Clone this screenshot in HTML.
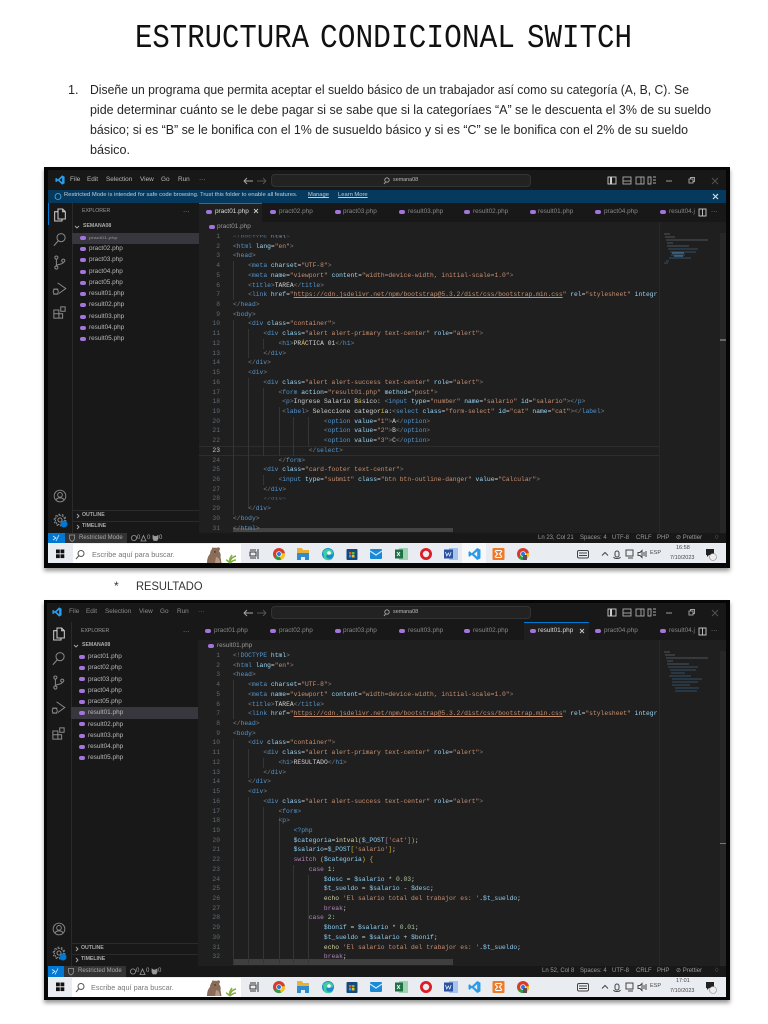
<!DOCTYPE html>
<html lang="es"><head><meta charset="utf-8"><title>Estructura Condicional Switch</title>
<style>
html,body{margin:0;padding:0;background:#fff}
body{position:relative;width:768px;height:1024px;overflow:hidden;font-family:"Liberation Sans",sans-serif}
.b{position:absolute}
.x{position:absolute;white-space:nowrap;line-height:1;font-size:6.4px;color:#b8b8b8}
.scr{position:absolute;left:0;top:0;width:768px;height:1024px;filter:blur(.35px)}
pre{position:absolute;margin:0;font:6.32px/9.72px "Liberation Mono",monospace;color:#d0d0d0;overflow:hidden;white-space:pre}
pre.g{text-align:right;color:#626a70;width:20px;left:200px}
i{font-style:normal}
.t{color:#5296d0}.a{color:#9bd5f5}.s{color:#c98f70}.d{color:#7c7c7c}.v{color:#8fd0f5}.k{color:#b583bf}.f{color:#d5d5a5}.n{color:#aac8a0}.y{color:#d8b830}.u{text-decoration:underline}
.q{display:inline-block;transform:scaleY(.55);opacity:.75}
.ph{position:absolute;width:6px;height:4px;border-radius:2px;background:#a274dc}
.w{position:absolute;background:#353535;width:1px}
svg{position:absolute;left:0;top:0;overflow:visible}
</style></head><body>
<svg width="768" height="160" style="z-index:2">
<g font-family="Liberation Mono,monospace" font-size="33" fill="#111">
<text x="135" y="47" textLength="174" lengthAdjust="spacingAndGlyphs">ESTRUCTURA</text>
<text x="320" y="47" textLength="195" lengthAdjust="spacingAndGlyphs">CONDICIONAL</text>
<text x="527" y="47" textLength="105" lengthAdjust="spacingAndGlyphs">SWITCH</text>
</g>
<g font-family="Liberation Sans,sans-serif" font-size="12.6" fill="#262626">
<text x="68" y="94">1.</text>
<text x="90" y="94" textLength="599" lengthAdjust="spacingAndGlyphs">Diseñe un programa que permita aceptar el sueldo básico de un trabajador así como su categoría (A, B, C). Se</text>
<text x="90" y="114" textLength="621" lengthAdjust="spacingAndGlyphs">pide determinar cuánto se le debe pagar si se sabe que si la categoríaes “A” se le descuenta el 3% de su sueldo</text>
<text x="90" y="134" textLength="598" lengthAdjust="spacingAndGlyphs">básico; si es “B” se le bonifica con el 1% de susueldo básico y si es “C” se le bonifica con el 2% de su sueldo</text>
<text x="90" y="154" textLength="40" lengthAdjust="spacingAndGlyphs">básico.</text>
</g>
<defs>
<symbol id="files" viewBox="0 0 24 24"><path d="M9 3h7l4 4v11H9zM16 3v4h4M9 7H4v14h11v-3" fill="none" stroke="#c8c8c8" stroke-width="1.6"/></symbol>
<symbol id="search" viewBox="0 0 24 24"><circle cx="14.5" cy="9" r="6.5" fill="none" stroke="#8a8a8a" stroke-width="1.6"/><path d="M10 14L3 22" stroke="#8a8a8a" stroke-width="1.6"/></symbol>
<symbol id="scm" viewBox="0 0 24 24"><g fill="none" stroke="#8a8a8a" stroke-width="1.6"><circle cx="7" cy="4" r="2.5"/><circle cx="7" cy="20" r="2.5"/><circle cx="18" cy="9" r="2.5"/><path d="M7 6.5v11M18 11.5c0 4-11 3-11 6"/></g></symbol>
<symbol id="dbg" viewBox="0 0 24 24"><g fill="none" stroke="#8a8a8a" stroke-width="1.6"><path d="M9 3l13 9-11 8"/><circle cx="6" cy="17" r="4"/><path d="M2 13h8M2 21h8"/></g></symbol>
<symbol id="ext" viewBox="0 0 24 24"><g fill="none" stroke="#8a8a8a" stroke-width="1.6"><path d="M3 8h8v13H3zM3 14h14v7h-6"/><path d="M14 3h7v7h-7z"/></g></symbol>
<symbol id="acc" viewBox="0 0 24 24"><g fill="none" stroke="#8a8a8a" stroke-width="1.6"><circle cx="12" cy="12" r="10"/><circle cx="12" cy="10" r="4"/><path d="M5 19c2-5 12-5 14 0"/></g></symbol>
<symbol id="gear" viewBox="0 0 24 24"><g fill="none" stroke="#9a9a9a" stroke-width="1.6"><circle cx="12" cy="12" r="3.5"/><circle cx="12" cy="12" r="8" stroke-dasharray="3 1.5"/><circle cx="12" cy="12" r="10" stroke-dasharray="3 3.3"/></g></symbol>
<symbol id="code" viewBox="0 0 24 24"><path d="M17 1l6 3v16l-6 3L7 13.500 3 17l-2-1V8l2-1 4 3.500zM17 7l-6 5 6 5z" fill="#2a9be8" fill-rule="evenodd"/></symbol>
<g id="stl" fill="none" stroke="#9a9a9a" stroke-width=".8">
<path d="M53 -2l3 2-3 2M59 -3l-3 6" stroke="#dcefff"/>
<path d="M69.500 -3h5v3c0 2-1.500 3-2.500 3.500-1-.5-2.500-1.500-2.500-3.500z"/>
<circle cx="134" cy="0" r="2.600"/><path d="M141 3l2.500-5.500L146 3z"/><path d="M153 -2.500l1.500 1h2l1.500-1v3l-1 2h-3l-1-2z" fill="#9a9a9a"/>
</g>
<g id="tbi">
<g fill="#111"><rect x="56" y="-4.500" width="3.800" height="3.800"/><rect x="60.500" y="-4.500" width="3.800" height="3.800"/><rect x="56" y=".3" width="3.800" height="3.800"/><rect x="60.500" y=".3" width="3.800" height="3.800"/></g>
<circle cx="81" cy="-.5" r="3" fill="none" stroke="#555" stroke-width="1"/><path d="M79 1.500L76 5" stroke="#555"/>
<path d="M250 -4h6M250 4h6M250 -2h6v4h-6zM258 -5v10" fill="none" stroke="#333" stroke-width="1"/>
<g id="chr"><circle cx="279" cy="0" r="6" fill="#d93a2c"/><path d="M279 0L274 3.500A6 6 0 0 0 281 5.700z" fill="#2f9e46"/><path d="M279 0L285 -1A6 6 0 0 1 281 5.700z" fill="#f5c518"/><circle cx="279" cy="0" r="2.800" fill="#fff"/><circle cx="279" cy="0" r="2.100" fill="#2a7de1"/></g>
<path d="M297 -6h5l1 2h6v3h-12z" fill="#e8b23a"/><path d="M297 -1h12v7h-4v-3h-4v3h-4z" fill="#2e8ccf"/>
<circle cx="328" cy="0" r="6" fill="#1c8ad0"/><path d="M323 -2c3-5 10-3 10 1 0 2-3 2-4 1-2 0-4 2-2 4 1 1 4 1 6 0-2 3-7 3-9 0z" fill="#3fcf9a"/><circle cx="329" cy="-1" r="1.800" fill="#fff"/>
<rect x="346.500" y="-5" width="11" height="11" rx="1" fill="#174a7c"/><rect x="349" y="-2" width="2.500" height="2.500" fill="#e8562a"/><rect x="352" y="-2" width="2.500" height="2.500" fill="#7cb82f"/><rect x="349" y="1" width="2.500" height="2.500" fill="#2aa0e8"/><rect x="352" y="1" width="2.500" height="2.500" fill="#f5bd1f"/>
<rect x="370" y="-5" width="12" height="10" rx="1" fill="#1b8ad6"/><path d="M370 -3l6 4 6-4" fill="none" stroke="#cfeaff" stroke-width="1.200"/>
<rect x="399" y="-6" width="9" height="12" fill="#9dd3b3"/><rect x="395" y="-4.500" width="8" height="9" fill="#1d7044"/><path d="M397 -2l3 4M400 -2l-3 4" stroke="#fff" stroke-width=".9"/>
<circle cx="426" cy="0" r="4.600" fill="none" stroke="#dd1c24" stroke-width="2.800"/>
<rect x="449" y="-6" width="9" height="12" fill="#a9c4ea"/><rect x="444" y="-4.500" width="9" height="9" fill="#2a52a5"/><path d="M445.500 -2l1.300 4 1.500-3 1.500 3 1.300-4" fill="none" stroke="#fff" stroke-width=".7"/>
<use href="#code" x="468" y="-6.500" width="13" height="13"/>
<rect x="492.500" y="-6" width="12" height="12" rx="1" fill="#ef7a2a"/><path d="M495 -3l2.500 3-2.500 3M502 -3l-2.500 3 2.500 3M495.500 -3.500h6M495.500 3.500h6" fill="none" stroke="#fff" stroke-width="1.100"/>
<use href="#chr" x="244"/><rect x="523" y="1" width="4" height="5" fill="#6b4a58"/>
<g fill="none" stroke="#444" stroke-width="1"><rect x="577.500" y="-3.500" width="11" height="7.500" rx="1.500"/><path d="M579 -1h8M579 1.500h8"/><path d="M602 1.500l3-3 3 3"/><rect x="615" y="-3" width="4" height="6" rx="2"/><path d="M613.500 3c1 2 6 2 7 0"/><rect x="626" y="-4" width="7" height="6"/><path d="M628 4h5"/><path d="M638 -1.500h2l2-2v7l-2-2h-2zM644 -2v4M646 -3v6"/></g>
<path d="M706 -5h8v6h-5l-2 2v-2h-1z" fill="#222"/><circle cx="713" cy="3" r="3.500" fill="#eee" stroke="#888" stroke-width=".6"/>
<path d="M207 9c0-4 1-7 3-9 0-2 1-4 2-5 0-2 1-2 2-1 1-.5 2-.5 3 0 1-1 2-1 3 .5 0 1-.5 2-1 2.500 1.500 2 2 4 1.500 6l1 6z" fill="#8a6c58"/><path d="M216 3c2 0 4 2 4 6h-5z" fill="#b39a84"/><circle cx="215" cy="-2" r=".7" fill="#222"/><path d="M230 9c-1-3 0-5 2-8M230 9c0-4 2-6 6-7M230 9c2-2 4-3 6-3M230 9c-2-2-3-3-4-3" stroke="#7fae3d" stroke-width="1.500" fill="none"/>
</g>
</defs>
</svg>

<div class="x" style="left:114px;top:580px;font-size:12px;color:#333">*</div>
<div class="x" style="left:136px;top:580px;font-size:12.4px;color:#333;transform-origin:left;transform:scaleX(.9)">RESULTADO</div>

<!-- SCREEN 1 -->
<div class="scr" id="s1">
<div class="b" style="left:44px;top:167px;width:686px;height:401px;background:#060606;box-shadow:0 3px 4px rgba(0,0,0,.4)"></div>
<div class="b" style="left:48px;top:170px;width:678px;height:20px;background:#181818"></div>
<div class="b" style="left:48px;top:190px;width:678px;height:13px;background:#05395e"></div>
<div class="b" style="left:48px;top:203px;width:151px;height:330px;background:#181818"></div>
<div class="b" style="left:199px;top:203px;width:527px;height:19px;background:#181818"></div>
<div class="b" style="left:199px;top:222px;width:527px;height:311px;background:#1f1f1f"></div>
<div class="b" style="left:199px;top:203px;width:63px;height:19px;background:#1f1f1f;border-top:1px solid #0078d4;box-sizing:border-box"></div>
<div class="b" style="left:48px;top:203px;width:1px;height:22px;background:#0078d4"></div>
<div class="b" style="left:72px;top:203px;width:1px;height:330px;background:#2a2a2a"></div>
<div class="b" style="left:72px;top:233px;width:127px;height:11px;background:#37373d"></div>
<div class="b" style="left:73px;top:510px;width:126px;height:1px;background:#2b2b2b"></div>
<div class="b" style="left:73px;top:521px;width:126px;height:1px;background:#2b2b2b"></div>
<div class="b" style="left:271px;top:174px;width:260px;height:13px;background:#222;border:1px solid #333;border-radius:4px;box-sizing:border-box"></div>
<div class="b" style="left:48px;top:533px;width:678px;height:10px;background:#181818"></div>
<div class="b" style="left:48px;top:533px;width:17px;height:10px;background:#0078d4"></div>
<div class="b" style="left:65px;top:533px;width:62px;height:10px;background:#333"></div>
<div class="b" style="left:48px;top:543px;width:678px;height:20px;background:#e9edf1"></div>
<div class="b" style="left:73px;top:544px;width:168px;height:19px;background:#fff"></div>
<div class="b" style="left:462px;top:543px;width:24px;height:20px;background:#f6f8fa"></div>
<div class="b" style="left:659px;top:222px;width:1px;height:311px;background:#282828"></div>
<div class="b" style="left:720px;top:233px;width:6px;height:300px;background:#272727"></div>
<div class="b" style="left:720px;top:339px;width:6px;height:2px;background:#666"></div>
<div class="b" style="left:233px;top:528px;width:220px;height:4px;background:#444"></div>
<div class="b" style="left:199px;top:446px;width:460px;height:10px;border-top:1px solid #2d2d2d;border-bottom:1px solid #2d2d2d;box-sizing:border-box"></div>
<div class="w" style="left:233px;top:261px;height:39px"></div><div class="w" style="left:233px;top:320px;height:195px"></div>
<div class="w" style="left:248px;top:329px;height:29px"></div><div class="w" style="left:248px;top:378px;height:130px"></div>
<div class="w" style="left:263px;top:339px;height:10px"></div><div class="w" style="left:263px;top:388px;height:68px"></div><div class="w" style="left:263px;top:475px;height:10px"></div>
<div class="w" style="left:279px;top:407px;height:49px"></div><div class="w" style="left:293px;top:417px;height:39px"></div><div class="w" style="left:308px;top:417px;height:29px"></div>

<svg width="768" height="1024">
<use href="#code" x="55" y="175" width="10" height="10"/>
<use href="#files" x="52" y="207" width="16" height="16"/><use href="#search" x="52" y="232" width="15" height="15"/><use href="#scm" x="52" y="255" width="15" height="15"/><use href="#dbg" x="52" y="281" width="15" height="15"/><use href="#ext" x="52" y="305" width="15" height="15"/><use href="#acc" x="53" y="489" width="14" height="14"/><use href="#gear" x="53" y="513" width="14" height="14"/>
<circle cx="64" cy="524" r="3.500" fill="#0078d4"/>
<use href="#tbi" y="554"/>
<use href="#stl" y="538"/>
<circle cx="58" cy="196.500" r="3" fill="none" stroke="#5cb0e8" stroke-width=".8"/>
<g stroke="#aaa" fill="none" stroke-width=".9"><path d="M244 181h9M247 178l-3 3 3 3"/><path d="M257 181h9M263 178l3 3-3 3" stroke="#555"/><circle cx="387" cy="180" r="2.200"/><path d="M385.500 182l-1.500 2"/>
<rect x="608" y="177" width="8" height="7" stroke="#ccc"/><path d="M611 177v7" stroke="#ccc" stroke-width="2"/><rect x="623" y="177" width="8" height="7"/><path d="M623 181h8"/><rect x="636" y="177" width="8" height="7"/><path d="M641 177v7"/><path d="M648 177h3v7h-3zM653 177h3M653 180h3M653 183h3"/>
<path d="M666 181h6"/><rect x="689" y="179" width="4" height="4"/><path d="M690.500 179v-1.500h4v4h-1.500"/><path d="M712 178l6 6M718 178l-6 6" stroke="#555"/>
<path d="M713 194l5 5M718 194l-5 5" stroke="#ddd" stroke-width="1.200"/><path d="M254 209l4 4M258 209l-4 4" stroke="#ccc"/><rect x="699" y="209" width="7" height="7" stroke="#ccc"/><path d="M702.500 209v7" stroke="#ccc"/>
<path d="M75 226l2 2 2-2M77 514l2 2-2 2M77 525l2 2-2 2"/></g>
<g stroke-width=".7" fill="none" opacity=".65">
<path d="M664 234h6M665 237h10M666 240h42M667 243h6M667 246h22" stroke="#7d8d9a"/><path d="M668 249h30M670 252h26M671 255h14M669 258h22M666 261h3M664 263h4" stroke="#4a83ad"/><path d="M672 253h12M674 256h9" stroke="#4c8fc4" stroke-width="1.400"/>
</g>
</svg>

<i class="ph" style="left:206px;top:210px"></i><i class="ph" style="left:270px;top:210px"></i><i class="ph" style="left:335px;top:210px"></i><i class="ph" style="left:399px;top:210px"></i><i class="ph" style="left:464px;top:210px"></i><i class="ph" style="left:530px;top:210px"></i><i class="ph" style="left:595px;top:210px"></i><i class="ph" style="left:660px;top:210px"></i><i class="ph" style="left:209px;top:225px"></i>
<i class="ph" style="left:80px;top:236px"></i><i class="ph" style="left:80px;top:247px"></i><i class="ph" style="left:80px;top:258px"></i><i class="ph" style="left:80px;top:270px"></i><i class="ph" style="left:80px;top:281px"></i><i class="ph" style="left:80px;top:292px"></i><i class="ph" style="left:80px;top:303px"></i><i class="ph" style="left:80px;top:315px"></i><i class="ph" style="left:80px;top:326px"></i><i class="ph" style="left:80px;top:337px"></i>

<div class="x" style="left:70px;top:177px">File</div><div class="x" style="left:87px;top:177px">Edit</div><div class="x" style="left:106px;top:177px">Selection</div><div class="x" style="left:140px;top:177px">View</div><div class="x" style="left:161px;top:177px">Go</div><div class="x" style="left:178px;top:177px">Run</div><div class="x" style="left:199px;top:177px">···</div>
<div class="x" style="left:393px;top:178px;font-size:5.400px">semana08</div>
<div class="x" style="left:64px;top:193px;font-size:5.850px;color:#c3ced6">Restricted Mode is intended for safe code browsing. Trust this folder to enable all features.</div>
<div class="x u" style="left:308px;top:193px;font-size:5.800px;color:#c3ced6">Manage</div><div class="x u" style="left:338px;top:193px;font-size:5.800px;color:#c3ced6">Learn More</div>

<div class="x" style="left:82px;top:209px;font-size:5.200px;color:#999">EXPLORER</div><div class="x" style="left:183px;top:209px">···</div>
<div class="x" style="left:83px;top:224px;font-size:5.200px;font-weight:bold;color:#aaa">SEMANA08</div>
<div class="x" style="left:89px;top:236px;font-size:5.400px;color:#999;transform:scaleY(.7)">pract01.php</div>
<div class="x" style="left:89px;top:246px">pract02.php</div><div class="x" style="left:89px;top:257px">pract03.php</div><div class="x" style="left:89px;top:269px">pract04.php</div><div class="x" style="left:89px;top:280px">pract05.php</div><div class="x" style="left:89px;top:291px">result01.php</div><div class="x" style="left:89px;top:302px">result02.php</div><div class="x" style="left:89px;top:314px">result03.php</div><div class="x" style="left:89px;top:325px">result04.php</div><div class="x" style="left:89px;top:336px">result05.php</div>
<div class="x" style="left:82px;top:513px;font-size:5.200px;font-weight:bold;color:#aaa">OUTLINE</div><div class="x" style="left:82px;top:524px;font-size:5.200px;font-weight:bold;color:#aaa">TIMELINE</div>

<div class="x" style="left:215px;top:209px;color:#ddd">pract01.php</div><div class="x" style="left:279px;top:209px;color:#888">pract02.php</div><div class="x" style="left:343px;top:209px;color:#888">pract03.php</div><div class="x" style="left:408px;top:209px;color:#888">result03.php</div><div class="x" style="left:473px;top:209px;color:#888">result02.php</div><div class="x" style="left:538px;top:209px;color:#888">result01.php</div><div class="x" style="left:604px;top:209px;color:#888">pract04.php</div><div class="x" style="left:669px;top:209px;color:#888">result04.j</div><div class="x" style="left:711px;top:209px;color:#aaa">···</div>
<div class="x" style="left:217px;top:224px;color:#999">pract01.php</div>

<pre class="g" style="top:232px;height:301px">1
2
3
4
5
6
7
8
9
10
11
12
13
14
15
16
17
18
19
20
21
22
<i style="color:#ccc">23</i>
24
25
26
27
28
29
30
31</pre>
<pre style="left:233px;top:232px;width:426px;height:301px"><i class="q"><i class="d">&lt;!</i><i class="t">DOCTYPE</i> <i class="a">html</i><i class="d">&gt;</i></i>
<i class="d">&lt;</i><i class="t">html</i> <i class="a">lang</i>=<i class="s">"en"</i><i class="d">&gt;</i>
<i class="d">&lt;</i><i class="t">head</i><i class="d">&gt;</i>
    <i class="d">&lt;</i><i class="t">meta</i> <i class="a">charset</i>=<i class="s">"UTF-8"</i><i class="d">&gt;</i>
    <i class="d">&lt;</i><i class="t">meta</i> <i class="a">name</i>=<i class="s">"viewport"</i> <i class="a">content</i>=<i class="s">"width=device-width, initial-scale=1.0"</i><i class="d">&gt;</i>
    <i class="d">&lt;</i><i class="t">title</i><i class="d">&gt;</i>TAREA<i class="d">&lt;/</i><i class="t">title</i><i class="d">&gt;</i>
    <i class="d">&lt;</i><i class="t">link</i> <i class="a">href</i>=<i class="s">"<i class="u">https://cdn.jsdelivr.net/npm/bootstrap@5.3.2/dist/css/bootstrap.min.css</i>"</i> <i class="a">rel</i>=<i class="s">"stylesheet"</i> <i class="a">integr</i>
<i class="d">&lt;/</i><i class="t">head</i><i class="d">&gt;</i>
<i class="d">&lt;</i><i class="t">body</i><i class="d">&gt;</i>
    <i class="d">&lt;</i><i class="t">div</i> <i class="a">class</i>=<i class="s">"container"</i><i class="d">&gt;</i>
        <i class="d">&lt;</i><i class="t">div</i> <i class="a">class</i>=<i class="s">"alert alert-primary text-center"</i> <i class="a">role</i>=<i class="s">"alert"</i><i class="d">&gt;</i>
            <i class="d">&lt;</i><i class="t">h1</i><i class="d">&gt;</i>PR<i class="y">Á</i>CTICA 01<i class="d">&lt;/</i><i class="t">h1</i><i class="d">&gt;</i>
        <i class="d">&lt;/</i><i class="t">div</i><i class="d">&gt;</i>
    <i class="d">&lt;/</i><i class="t">div</i><i class="d">&gt;</i>
    <i class="d">&lt;</i><i class="t">div</i><i class="d">&gt;</i>
        <i class="d">&lt;</i><i class="t">div</i> <i class="a">class</i>=<i class="s">"alert alert-success text-center"</i> <i class="a">role</i>=<i class="s">"alert"</i><i class="d">&gt;</i>
            <i class="d">&lt;</i><i class="t">form</i> <i class="a">action</i>=<i class="s">"result01.php"</i> <i class="a">method</i>=<i class="s">"post"</i><i class="d">&gt;</i>
             <i class="d">&lt;</i><i class="t">p</i><i class="d">&gt;</i>Ingrese Salario B<i class="y">á</i>sico: <i class="d">&lt;</i><i class="t">input</i> <i class="a">type</i>=<i class="s">"number"</i> <i class="a">name</i>=<i class="s">"salario"</i> <i class="a">id</i>=<i class="s">"salario"</i><i class="d">&gt;&lt;/</i><i class="t">p</i><i class="d">&gt;</i>
             <i class="d">&lt;</i><i class="t">label</i><i class="d">&gt;</i> Seleccione categor<i class="y">í</i>a:<i class="d">&lt;</i><i class="t">select</i> <i class="a">class</i>=<i class="s">"form-select"</i> <i class="a">id</i>=<i class="s">"cat"</i> <i class="a">name</i>=<i class="s">"cat"</i><i class="d">&gt;&lt;/</i><i class="t">label</i><i class="d">&gt;</i>
                        <i class="d">&lt;</i><i class="t">option</i> <i class="a">value</i>=<i class="s">"1"</i><i class="d">&gt;</i>A<i class="d">&lt;/</i><i class="t">option</i><i class="d">&gt;</i>
                        <i class="d">&lt;</i><i class="t">option</i> <i class="a">value</i>=<i class="s">"2"</i><i class="d">&gt;</i>B<i class="d">&lt;/</i><i class="t">option</i><i class="d">&gt;</i>
                        <i class="d">&lt;</i><i class="t">option</i> <i class="a">value</i>=<i class="s">"3"</i><i class="d">&gt;</i>C<i class="d">&lt;/</i><i class="t">option</i><i class="d">&gt;</i>
                    <i class="d">&lt;/</i><i class="t">select</i><i class="d">&gt;</i>
            <i class="d">&lt;/</i><i class="t">form</i><i class="d">&gt;</i>
        <i class="d">&lt;</i><i class="t">div</i> <i class="a">class</i>=<i class="s">"card-footer text-center"</i><i class="d">&gt;</i>
            <i class="d">&lt;</i><i class="t">input</i> <i class="a">type</i>=<i class="s">"submit"</i> <i class="a">class</i>=<i class="s">"btn btn-outline-danger"</i> <i class="a">value</i>=<i class="s">"Calcular"</i><i class="d">&gt;</i>
        <i class="d">&lt;/</i><i class="t">div</i><i class="d">&gt;</i>
        <i class="q"><i class="d">&lt;/</i><i class="t">div</i><i class="d">&gt;</i></i>
    <i class="d">&lt;/</i><i class="t">div</i><i class="d">&gt;</i>
<i class="d">&lt;/</i><i class="t">body</i><i class="d">&gt;</i>
<i class="d">&lt;/</i><i class="t">html</i><i class="d">&gt;</i></pre>

<div class="x" style="left:79px;top:535px;font-size:6px;color:#aaa">Restricted Mode</div><div class="x" style="left:137px;top:535px;font-size:6px;color:#aaa">0</div><div class="x" style="left:147px;top:535px;font-size:6px;color:#aaa">0</div><div class="x" style="left:159px;top:535px;font-size:6px;color:#aaa">0</div>
<div class="x" style="left:538px;top:535px;font-size:6px;color:#999">Ln 23, Col 21</div><div class="x" style="left:580px;top:535px;font-size:6px;color:#999">Spaces: 4</div><div class="x" style="left:612px;top:535px;font-size:6px;color:#999">UTF-8</div><div class="x" style="left:636px;top:535px;font-size:6px;color:#999">CRLF</div><div class="x" style="left:657px;top:535px;font-size:6px;color:#999">PHP</div><div class="x" style="left:676px;top:535px;font-size:6px;color:#999">⊘ Prettier</div><div class="x" style="left:714px;top:535px;font-size:6px;color:#999">♢</div>
<div class="x" style="left:92px;top:551px;font-size:7.300px;color:#777">Escribe aquí para buscar.</div>
<div class="x" style="left:650px;top:551px;font-size:5.500px;color:#444">ESP</div><div class="x" style="left:676px;top:546px;font-size:5.500px;color:#444">16:58</div><div class="x" style="left:670px;top:556px;font-size:5.500px;color:#444">7/10/2023</div>
</div>

<!-- SCREEN 2 -->
<div class="scr" id="s2">
<div class="b" style="left:44px;top:600px;width:686px;height:400px;background:#060606;box-shadow:0 3px 4px rgba(0,0,0,.4)"></div>
<div class="b" style="left:47px;top:603px;width:679px;height:19px;background:#181818"></div>
<div class="b" style="left:47px;top:622px;width:151px;height:344px;background:#181818"></div>
<div class="b" style="left:198px;top:622px;width:528px;height:18px;background:#181818"></div>
<div class="b" style="left:198px;top:640px;width:528px;height:326px;background:#1f1f1f"></div>
<div class="b" style="left:71px;top:622px;width:1px;height:344px;background:#2a2a2a"></div>
<div class="b" style="left:524px;top:622px;width:65px;height:18px;background:#1f1f1f;border-top:1px solid #0078d4;box-sizing:border-box"></div>
<div class="b" style="left:71px;top:707px;width:127px;height:12px;background:#37373d"></div>
<div class="b" style="left:72px;top:943px;width:126px;height:1px;background:#2b2b2b"></div>
<div class="b" style="left:72px;top:954px;width:126px;height:1px;background:#2b2b2b"></div>
<div class="b" style="left:271px;top:606px;width:260px;height:13px;background:#222;border:1px solid #333;border-radius:4px;box-sizing:border-box"></div>
<div class="b" style="left:47px;top:966px;width:679px;height:11px;background:#181818"></div>
<div class="b" style="left:48px;top:966px;width:16px;height:11px;background:#0078d4"></div>
<div class="b" style="left:64px;top:966px;width:62px;height:11px;background:#333"></div>
<div class="b" style="left:48px;top:977px;width:678px;height:20px;background:#e9edf1"></div>
<div class="b" style="left:72px;top:978px;width:169px;height:19px;background:#fff"></div>
<div class="b" style="left:659px;top:640px;width:1px;height:326px;background:#282828"></div>
<div class="b" style="left:720px;top:651px;width:6px;height:315px;background:#272727"></div>
<div class="b" style="left:720px;top:843px;width:6px;height:1px;background:#777"></div>
<div class="b" style="left:233px;top:959px;width:220px;height:6px;background:#3f3f3f"></div>
<div class="w" style="left:233px;top:680px;height:39px"></div><div class="w" style="left:233px;top:739px;height:225px"></div>
<div class="w" style="left:248px;top:749px;height:29px"></div><div class="w" style="left:248px;top:797px;height:167px"></div>
<div class="w" style="left:263px;top:758px;height:10px"></div><div class="w" style="left:263px;top:807px;height:157px"></div><div class="w" style="left:279px;top:817px;height:147px"></div><div class="w" style="left:293px;top:865px;height:99px"></div><div class="w" style="left:308px;top:875px;height:89px"></div>

<svg width="768" height="1024">
<use href="#code" x="52" y="607" width="10" height="10"/>
<use href="#files" x="51" y="626" width="16" height="16"/><use href="#search" x="51" y="651" width="15" height="15"/><use href="#scm" x="51" y="675" width="15" height="15"/><use href="#dbg" x="51" y="700" width="15" height="15"/><use href="#ext" x="51" y="726" width="15" height="15"/><use href="#acc" x="52" y="922" width="14" height="14"/><use href="#gear" x="52" y="946" width="14" height="14"/>
<circle cx="63" cy="957" r="3.500" fill="#0078d4"/>
<use href="#tbi" y="987"/>
<use href="#stl" x="-1" y="971.500"/>
<g stroke="#aaa" fill="none" stroke-width=".9"><path d="M244 613h9M247 610l-3 3 3 3"/><path d="M257 613h9M263 610l3 3-3 3" stroke="#555"/><circle cx="387" cy="612" r="2.200"/><path d="M385.500 614l-1.500 2"/>
<rect x="608" y="609" width="8" height="7" stroke="#ccc"/><path d="M611 609v7" stroke="#ccc" stroke-width="2"/><rect x="623" y="609" width="8" height="7"/><path d="M623 613h8"/><rect x="636" y="609" width="8" height="7"/><path d="M641 609v7"/><path d="M648 609h3v7h-3zM653 609h3M653 612h3M653 615h3"/>
<path d="M666 613h6"/><rect x="689" y="611" width="4" height="4"/><path d="M690.500 611v-1.500h4v4h-1.500"/><path d="M712 610l6 6M718 610l-6 6" stroke="#555"/>
<path d="M580 629l4 4M584 629l-4 4" stroke="#ccc"/><rect x="699" y="628" width="7" height="7" stroke="#ccc"/><path d="M702.500 628v7" stroke="#ccc"/>
<path d="M74 645l2 2 2-2M76 947l2 2-2 2M76 958l2 2-2 2"/></g>
<g stroke-width=".7" fill="none" opacity=".65">
<path d="M664 652h6M665 655h10M666 658h42M667 661h6M667 664h22" stroke="#7d8d9a"/><path d="M668 667h30M670 670h26M671 673h14M669 676h22M672 679h30M672 682h26M672 685h18M675 688h24M675 691h22" stroke="#4a83ad"/>
</g>
</svg>

<i class="ph" style="left:205px;top:629px"></i><i class="ph" style="left:270px;top:629px"></i><i class="ph" style="left:335px;top:629px"></i><i class="ph" style="left:399px;top:629px"></i><i class="ph" style="left:464px;top:629px"></i><i class="ph" style="left:530px;top:629px"></i><i class="ph" style="left:595px;top:629px"></i><i class="ph" style="left:660px;top:629px"></i><i class="ph" style="left:208px;top:644px"></i>
<i class="ph" style="left:79px;top:655px"></i><i class="ph" style="left:79px;top:666px"></i><i class="ph" style="left:79px;top:677px"></i><i class="ph" style="left:79px;top:689px"></i><i class="ph" style="left:79px;top:700px"></i><i class="ph" style="left:79px;top:711px"></i><i class="ph" style="left:79px;top:722px"></i><i class="ph" style="left:79px;top:734px"></i><i class="ph" style="left:79px;top:745px"></i><i class="ph" style="left:79px;top:756px"></i>

<div class="x" style="left:69px;top:609px;color:#8a8a8a">File</div><div class="x" style="left:86px;top:609px;color:#8a8a8a">Edit</div><div class="x" style="left:105px;top:609px;color:#8a8a8a">Selection</div><div class="x" style="left:139px;top:609px;color:#8a8a8a">View</div><div class="x" style="left:160px;top:609px;color:#8a8a8a">Go</div><div class="x" style="left:177px;top:609px;color:#8a8a8a">Run</div><div class="x" style="left:198px;top:609px;color:#8a8a8a">···</div>
<div class="x" style="left:393px;top:610px;font-size:5.400px">semana08</div>

<div class="x" style="left:81px;top:629px;font-size:5.200px;color:#999">EXPLORER</div><div class="x" style="left:183px;top:629px">···</div>
<div class="x" style="left:82px;top:643px;font-size:5.200px;font-weight:bold;color:#aaa">SEMANA08</div>
<div class="x" style="left:88px;top:654px">pract01.php</div><div class="x" style="left:88px;top:665px">pract02.php</div><div class="x" style="left:88px;top:677px">pract03.php</div><div class="x" style="left:88px;top:688px">pract04.php</div><div class="x" style="left:88px;top:699px">pract05.php</div><div class="x" style="left:88px;top:710px">result01.php</div><div class="x" style="left:88px;top:722px">result02.php</div><div class="x" style="left:88px;top:733px">result03.php</div><div class="x" style="left:88px;top:744px">result04.php</div><div class="x" style="left:88px;top:755px">result05.php</div>
<div class="x" style="left:81px;top:946px;font-size:5.200px;font-weight:bold;color:#aaa">OUTLINE</div><div class="x" style="left:81px;top:957px;font-size:5.200px;font-weight:bold;color:#aaa">TIMELINE</div>

<div class="x" style="left:214px;top:628px;color:#888">pract01.php</div><div class="x" style="left:279px;top:628px;color:#888">pract02.php</div><div class="x" style="left:343px;top:628px;color:#888">pract03.php</div><div class="x" style="left:408px;top:628px;color:#888">result03.php</div><div class="x" style="left:473px;top:628px;color:#888">result02.php</div><div class="x" style="left:538px;top:628px;color:#ddd">result01.php</div><div class="x" style="left:604px;top:628px;color:#888">pract04.php</div><div class="x" style="left:669px;top:628px;color:#888">result04.j</div><div class="x" style="left:711px;top:628px;color:#aaa">···</div>
<div class="x" style="left:217px;top:643px;color:#999">result01.php</div>

<pre class="g" style="top:651px;height:308px">1
2
3
4
5
6
7
8
9
10
11
12
13
14
15
16
17
18
19
20
21
22
23
24
25
26
27
28
29
30
31
32</pre>
<pre style="left:233px;top:651px;width:426px;height:314px"><i class="d">&lt;!</i><i class="t">DOCTYPE</i> <i class="a">html</i><i class="d">&gt;</i>
<i class="d">&lt;</i><i class="t">html</i> <i class="a">lang</i>=<i class="s">"en"</i><i class="d">&gt;</i>
<i class="d">&lt;</i><i class="t">head</i><i class="d">&gt;</i>
    <i class="d">&lt;</i><i class="t">meta</i> <i class="a">charset</i>=<i class="s">"UTF-8"</i><i class="d">&gt;</i>
    <i class="d">&lt;</i><i class="t">meta</i> <i class="a">name</i>=<i class="s">"viewport"</i> <i class="a">content</i>=<i class="s">"width=device-width, initial-scale=1.0"</i><i class="d">&gt;</i>
    <i class="d">&lt;</i><i class="t">title</i><i class="d">&gt;</i>TAREA<i class="d">&lt;/</i><i class="t">title</i><i class="d">&gt;</i>
    <i class="d">&lt;</i><i class="t">link</i> <i class="a">href</i>=<i class="s">"<i class="u">https://cdn.jsdelivr.net/npm/bootstrap@5.3.2/dist/css/bootstrap.min.css</i>"</i> <i class="a">rel</i>=<i class="s">"stylesheet"</i> <i class="a">integr</i>
<i class="d">&lt;/</i><i class="t">head</i><i class="d">&gt;</i>
<i class="d">&lt;</i><i class="t">body</i><i class="d">&gt;</i>
    <i class="d">&lt;</i><i class="t">div</i> <i class="a">class</i>=<i class="s">"container"</i><i class="d">&gt;</i>
        <i class="d">&lt;</i><i class="t">div</i> <i class="a">class</i>=<i class="s">"alert alert-primary text-center"</i> <i class="a">role</i>=<i class="s">"alert"</i><i class="d">&gt;</i>
            <i class="d">&lt;</i><i class="t">h1</i><i class="d">&gt;</i>RESULTADO<i class="d">&lt;/</i><i class="t">h1</i><i class="d">&gt;</i>
        <i class="d">&lt;/</i><i class="t">div</i><i class="d">&gt;</i>
    <i class="d">&lt;/</i><i class="t">div</i><i class="d">&gt;</i>
    <i class="d">&lt;</i><i class="t">div</i><i class="d">&gt;</i>
        <i class="d">&lt;</i><i class="t">div</i> <i class="a">class</i>=<i class="s">"alert alert-success text-center"</i> <i class="a">role</i>=<i class="s">"alert"</i><i class="d">&gt;</i>
            <i class="d">&lt;</i><i class="t">form</i><i class="d">&gt;</i>
            <i class="d">&lt;</i><i class="t">p</i><i class="d">&gt;</i>
                <i class="t">&lt;?php</i>
                <i class="v">$categoria</i>=<i class="f">intval</i><i class="y">(</i><i class="v">$_POST</i><i class="k">[</i><i class="s">'cat'</i><i class="k">]</i><i class="y">)</i>;
                <i class="v">$salario</i>=<i class="v">$_POST</i><i class="y">[</i><i class="s">'salario'</i><i class="y">]</i>;
                <i class="k">switch</i> <i class="y">(</i><i class="v">$categoria</i><i class="y">) {</i>
                    <i class="k">case</i> <i class="n">1</i>:
                        <i class="v">$desc</i> = <i class="v">$salario</i> * <i class="n">0.03</i>;
                        <i class="v">$t_sueldo</i> = <i class="v">$salario</i> - <i class="v">$desc</i>;
                        <i class="f">echo</i> <i class="s">'El salario total del trabajor es: '</i>.<i class="v">$t_sueldo</i>;
                        <i class="k">break</i>;
                    <i class="k">case</i> <i class="n">2</i>:
                        <i class="v">$bonif</i> = <i class="v">$salario</i> * <i class="n">0.01</i>;
                        <i class="v">$t_sueldo</i> = <i class="v">$salario</i> + <i class="v">$bonif</i>;
                        <i class="f">echo</i> <i class="s">'El salario total del trabajor es: '</i>.<i class="v">$t_sueldo</i>;
                        <i class="k">break</i>;</pre>

<div class="x" style="left:78px;top:968px;font-size:6px;color:#aaa">Restricted Mode</div><div class="x" style="left:136px;top:968px;font-size:6px;color:#aaa">0</div><div class="x" style="left:146px;top:968px;font-size:6px;color:#aaa">0</div><div class="x" style="left:158px;top:968px;font-size:6px;color:#aaa">0</div>
<div class="x" style="left:542px;top:968px;font-size:6px;color:#999">Ln 52, Col 8</div><div class="x" style="left:580px;top:968px;font-size:6px;color:#999">Spaces: 4</div><div class="x" style="left:612px;top:968px;font-size:6px;color:#999">UTF-8</div><div class="x" style="left:636px;top:968px;font-size:6px;color:#999">CRLF</div><div class="x" style="left:657px;top:968px;font-size:6px;color:#999">PHP</div><div class="x" style="left:676px;top:968px;font-size:6px;color:#999">⊘ Prettier</div><div class="x" style="left:714px;top:968px;font-size:6px;color:#999">♢</div>
<div class="x" style="left:91px;top:984px;font-size:7.300px;color:#777">Escribe aquí para buscar.</div>
<div class="x" style="left:650px;top:984px;font-size:5.500px;color:#444">ESP</div><div class="x" style="left:676px;top:979px;font-size:5.500px;color:#444">17:01</div><div class="x" style="left:670px;top:989px;font-size:5.500px;color:#444">7/10/2023</div>
</div>
</body></html>
